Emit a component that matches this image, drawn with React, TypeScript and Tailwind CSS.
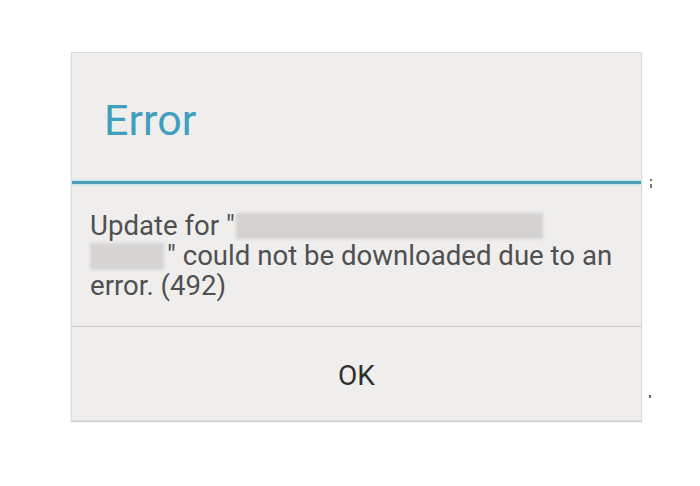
export default function App() {
  return (
    <div className="h-[486px] w-[700px] bg-white pt-[52px] pl-[71px]" style={{ fontFamily: "Roboto, 'Noto Sans', sans-serif" }}>
      <div className="relative w-[571px]">
        <div className="flex h-[369px] flex-col border border-[#dcdbda] bg-[#efeeed] shadow-[0_1px_1px_rgba(0,0,0,0.18)]">
          {/* title */}
          <div className="flex h-[128px] items-center pl-[32px] pt-[6px]">
            <span className="text-[43px] leading-none text-[#3f9fbf]">Error</span>
          </div>
          <div className="h-[3px] bg-[#4d9db5] shadow-[0_0_3px_rgba(120,220,240,0.9)]" />

          {/* message */}
          <div className="h-[142px] px-[18px] pt-[27px] text-[27.6px] leading-[30px] text-[#505050]">
            <div className="flex items-center">
              <span>Update for "</span>
              <span className="ml-[1px] inline-block h-[26px] w-[307px] bg-[#d3d2d1] blur-[1.5px]" />
            </div>
            <div className="flex items-center">
              <span className="inline-block h-[27px] w-[74px] bg-[#d6d5d4] blur-[1.5px]" />
              <span className="ml-[3px]">" could not be downloaded due to an</span>
            </div>
            <div>error. (492)</div>
          </div>

          <div className="h-px bg-[#cdcccb]" />

          {/* button */}
          <div className="flex flex-1 items-center justify-center pt-[4px]">
            <span className="text-[28px] text-[#2e2e2e]">OK</span>
          </div>
        </div>

        <span className="absolute left-[579px] top-[127px] h-[2px] w-[2px] bg-[#777]" />
        <span className="absolute left-[579px] top-[132px] h-[4px] w-[2px] bg-[#777]" />
        <span className="absolute left-[578px] top-[343px] h-[3px] w-[2px] bg-[#666]" />
      </div>
    </div>
  )
}
